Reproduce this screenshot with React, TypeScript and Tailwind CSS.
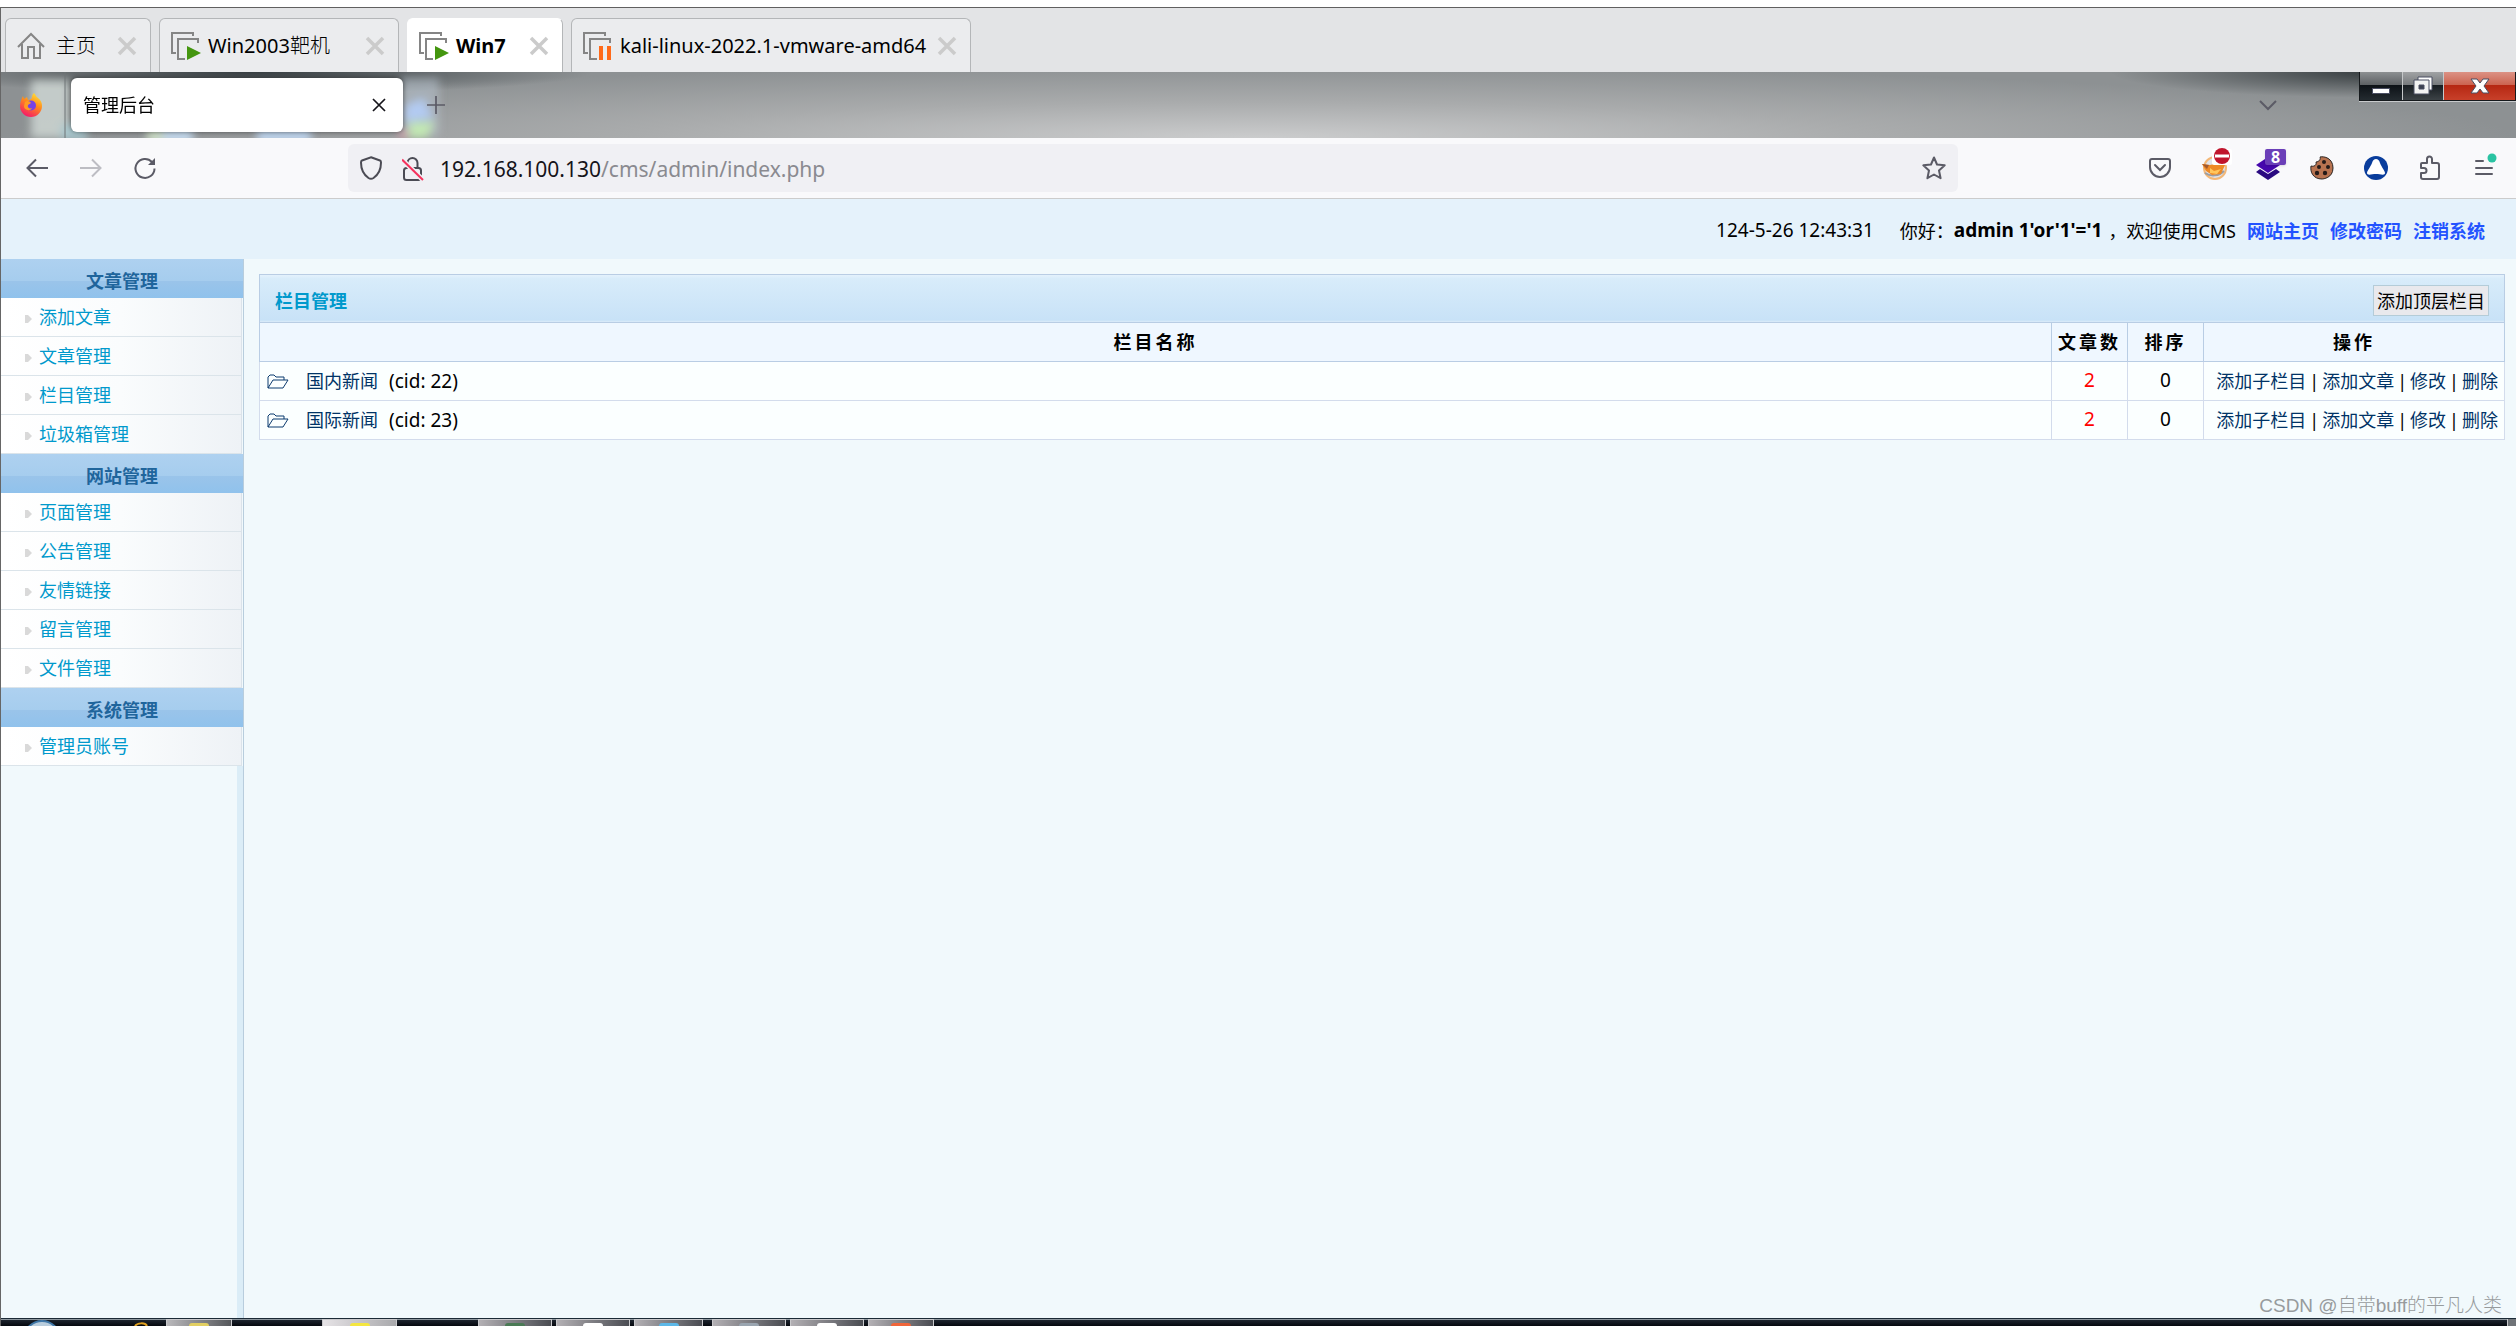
import type { ReactNode } from 'react';

const menu = [
  { title: '文章管理', items: ['添加文章', '文章管理', '栏目管理', '垃圾箱管理'] },
  { title: '网站管理', items: ['页面管理', '公告管理', '友情链接', '留言管理', '文件管理'] },
  { title: '系统管理', items: ['管理员账号'] },
];

const columns = [
  { name: '国内新闻', cid: 22, count: 2, order: 0 },
  { name: '国际新闻', cid: 23, count: 2, order: 0 },
];

const actions = ['添加子栏目', '添加文章', '修改', '删除'];

function HomeIcon() {
  return (
    <svg width="28" height="28" viewBox="0 0 28 28" fill="none" stroke="#858585" strokeWidth="2">
      <path d="M1 15 14 2l13 13M5 12v14h6V15h6v11h6V12" />
    </svg>
  );
}

function VmIcon({ paused = false }: { paused?: boolean }) {
  return (
    <svg width="30" height="30" viewBox="0 0 30 30" fill="none">
      <path d="M5 22H1V2h21v3" stroke="#858585" strokeWidth="2" />
      <path d="M14 28H7V8h20v4" stroke="#858585" strokeWidth="2" />
      {paused ? (
        <path d="M16 15h4v14h-4zM24 15h4v14h-4z" fill="#ff6a1a" />
      ) : (
        <path d="M16 15v14l14-7z" fill="#44960f" />
      )}
    </svg>
  );
}

function VmTab({
  icon,
  label,
  active = false,
  className = '',
}: {
  icon: ReactNode;
  label: ReactNode;
  active?: boolean;
  className?: string;
}) {
  return (
    <div
      className={`flex items-center h-full rounded-t-md border border-b-0 pl-[11px] pr-[13px] ${
        active ? 'bg-white border-white border-r-[#b4b6b8] font-bold' : 'bg-[#ebecee] border-[#b4b6b8]'
      } ${className}`}
    >
      {icon}
      <span className="ml-[7px] flex-1 whitespace-nowrap text-black">{label}</span>
      <button aria-label="关闭标签">
        <svg width="20" height="20" viewBox="0 0 20 20" stroke="#cbcbcb" strokeWidth="3.5">
          <path d="M2 2l16 16M18 2 2 18" />
        </svg>
      </button>
    </div>
  );
}

function VmTabs() {
  return (
    <div className="flex h-[65px] gap-2 border-t border-[#606060] bg-[#e3e4e6] pt-[10px] pl-1 text-xl">
      <VmTab className="w-[146px]" icon={<HomeIcon />} label={<span className="ml-1 font-light">主页</span>} />
      <VmTab
        className="w-60"
        icon={<VmIcon />}
        label={
          <>
            Win2003<span className="font-light">靶机</span>
          </>
        }
      />
      <VmTab className="w-[156px]" icon={<VmIcon />} label="Win7" active />
      <VmTab className="w-[400px]" icon={<VmIcon paused />} label="kali-linux-2022.1-vmware-amd64" />
    </div>
  );
}

function FirefoxLogo() {
  return (
    <svg width="24" height="24" viewBox="0 0 24 24">
      <defs>
        <linearGradient id="fox" x1="0.8" y1="0" x2="0.3" y2="1">
          <stop offset="0" stopColor="#ffe83a" />
          <stop offset="0.45" stopColor="#ff8a1c" />
          <stop offset="1" stopColor="#f5156c" />
        </linearGradient>
      </defs>
      <path d="M15 0c2 2 2 4 4 5 3 2 4 5 4 8a11 11 0 0 1-22 0C1 9 3 5 4 3l1 3 3-2 1 3c2 0 4-1 4-3s1-3 2-4z" fill="url(#fox)" />
      <circle cx="12" cy="12.500" r="5" fill="#7542e5" />
      <path d="M6 9c2-2 5-1 6 1l-3 2c-1 3 2 4 4 3-2 4-8 2-8-2z" fill="#ff9a22" />
    </svg>
  );
}

// Desktop icons showing through the glass behind the title bar
function GlassBlur() {
  return (
    <svg className="absolute inset-0 h-full w-full" aria-hidden="true">
      <defs>
        <filter id="glass" x="-50%" y="-50%" width="200%" height="200%">
          <feGaussianBlur stdDeviation="4" />
        </filter>
      </defs>
      <g filter="url(#glass)">
        <path d="M30 8h38v58H30z" fill="#d5dfdb" opacity="0.75" />
        <path d="M60 52h26v16H60z" fill="#a7c6cc" />
        <path d="M146 56h18v14h-18z" fill="#cfe0c8" />
        <path d="M162 56h30v14h-30z" fill="#c6dcf0" />
        <path d="M256 56h54v14h-54z" fill="#bfd6ef" />
        <path d="M400 6h38v58h-38z" fill="#b6c2cd" opacity="0.55" />
        <path d="M404 34l18-8 10 20-28 4z" fill="#b2cbf2" />
        <path d="M408 50h26l-8 16h-18z" fill="#c2e8b4" />
        <path d="M398 58h8v8h-8z" fill="#d79aa6" />
      </g>
      <path d="M64 0v66" stroke="#6f7476" strokeWidth="1" />
    </svg>
  );
}

function WindowControls() {
  return (
    <div className="relative flex h-[29px] self-start border border-t-0 border-[#15191c] text-white shadow-[0_1px_0_#c8cacc]">
      <button
        aria-label="最小化"
        className="flex w-[43px] items-end justify-center border-r border-[#c6c8ca] bg-[linear-gradient(#8c8f91_0%,#5e6265_45%,#0c1116_46%,#242b30_100%)] pb-1.5"
      >
        <span className="h-[6px] w-[18px] border border-[#4b4f63] bg-white" />
      </button>
      <button
        aria-label="还原"
        className="flex w-[41px] items-center justify-center border-r border-[#c6c8ca] bg-[linear-gradient(#a0a2a4_0%,#787b7e_45%,#171c21_46%,#3c4246_100%)]"
      >
        <svg width="20" height="20" viewBox="0 0 20 20" stroke="#4b4f63">
          <path d="M5 1h14v13H5z" fill="#fff" />
          <path d="M1 4h15v14H1z" fill="#f2f2f2" />
          <path d="M6 9h5v4H6z" fill="#3c4150" />
        </svg>
      </button>
      <button
        aria-label="关闭"
        className="flex w-[71px] items-center justify-center bg-[linear-gradient(#dc9184_0%,#cc6552_45%,#b52712_46%,#c8402a_100%)]"
      >
        <svg width="20" height="18" viewBox="0 0 20 18">
          <path d="M1 2h6l3 4 3-4h6l-5 7 5 7h-6l-3-4-3 4H1l5-7z" fill="#fff" stroke="#4b4f63" />
        </svg>
      </button>
    </div>
  );
}

function TitleBar() {
  return (
    <div className="relative flex h-[66px] items-center overflow-hidden bg-[radial-gradient(ellipse_340px_22px_at_10%_0%,rgba(40,48,52,0.85),transparent),radial-gradient(ellipse_280px_26px_at_95%_0%,rgba(35,42,45,0.85),transparent),radial-gradient(ellipse_50%_110%_at_50%_100%,#cbcccd_0%,#a9abac_50%,#8d9193_100%)]">
      <GlassBlur />
      <div className="relative flex w-[70px] items-center pl-[18px]">
        <FirefoxLogo />
      </div>
      <div className="relative flex h-[54px] w-[332px] items-center justify-between rounded-md bg-white pl-3 pr-4 text-lg text-black shadow-[0_0_5px_rgba(0,0,0,0.5)]">
        <span>管理后台</span>
        <button aria-label="关闭标签页">
          <svg width="16" height="16" viewBox="0 0 16 16" stroke="#15141a" strokeWidth="1.700">
            <path d="M2 2l12 12M14 2 2 14" />
          </svg>
        </button>
      </div>
      <button aria-label="新标签页" className="relative ml-6">
        <svg width="18" height="18" viewBox="0 0 18 18" stroke="#5b5b66" strokeWidth="1.700">
          <path d="M9 0v18M0 9h18" />
        </svg>
      </button>
      <div className="flex-1" />
      <button aria-label="列出所有标签页" className="relative mr-[81px]">
        <svg width="20" height="12" viewBox="0 0 20 12" fill="none" stroke="#5b5b66" strokeWidth="2">
          <path d="M2 2l8 8 8-8" />
        </svg>
      </button>
      <WindowControls />
    </div>
  );
}

function ToolButton({ label, children }: { label: string; children: ReactNode }) {
  return (
    <button aria-label={label} className="relative flex h-12 w-[54px] items-center justify-center">
      {children}
    </button>
  );
}

function Toolbar() {
  return (
    <div className="flex h-[61px] items-center border-b border-[#cccccc] bg-[#f9f9fb] pl-[9px] pr-[5px]">
      <ToolButton label="后退">
        <svg width="22" height="20" viewBox="0 0 22 20" fill="none" stroke="#5b5b66" strokeWidth="2">
          <path d="M22 10H2M10 1.500 1.500 10l8.500 8.500" />
        </svg>
      </ToolButton>
      <ToolButton label="前进">
        <svg width="22" height="20" viewBox="0 0 22 20" fill="none" stroke="#bdbdc3" strokeWidth="2">
          <path d="M0 10h20M12 1.500l8.500 8.500-8.500 8.500" />
        </svg>
      </ToolButton>
      <ToolButton label="刷新">
        <svg width="24" height="24" viewBox="0 0 24 24" fill="none" stroke="#5b5b66" strokeWidth="2">
          <path d="M19 6a9.500 9.500 0 1 0 2.500 6.500" />
          <path d="M22 2v7h-7z" fill="#5b5b66" stroke="none" />
        </svg>
      </ToolButton>
      <div className="ml-44 flex h-12 flex-1 items-center rounded-md bg-[#f0f0f4] pl-3">
        <svg width="22" height="24" viewBox="0 0 22 24" fill="none" stroke="#4b4b54" strokeWidth="2">
          <path d="M11 1.200 20 4.500c1 .4 1 1 1 2 0 7-2.500 12-7.500 15.500-1.800 1.200-3.200 1.200-5 0C3.500 18.500 1 13.500 1 6.500c0-1 0-1.600 1-2z" />
        </svg>
        <svg className="ml-5" width="22" height="25" viewBox="0 0 22 25" fill="none" stroke="#4b4b54" strokeWidth="2">
          <rect x="2" y="12" width="17" height="12" rx="2.500" />
          <path d="M5.500 12V7a5 5 0 0 1 10 0v5" />
          <path d="M0 3.500 21 24" stroke="#f0f0f4" strokeWidth="5" />
          <path d="M0 3.500 21 24" stroke="#f5325c" />
        </svg>
        <div className="ml-4 flex-1 pt-1 text-[21px] text-[#8a8a90]">
          <span className="text-[#15141a]">192.168.100.130</span>/cms/admin/index.php
        </div>
        <button aria-label="收藏" className="mr-3">
          <svg width="24" height="24" viewBox="0 0 24 24" fill="none" stroke="#5b5b66" strokeWidth="2" strokeLinejoin="round">
            <path d="M12 1.500 15 8.500l7.700.8-5.700 5.200 1.600 7.700-6.600-3.700-6.600 3.700L7 14.500 1.300 9.300 9 8.500z" />
          </svg>
        </button>
      </div>
      <div className="ml-[175px] flex">
        <ToolButton label="Pocket">
          <svg width="22" height="20" viewBox="0 0 22 20" fill="none" stroke="#5b5b66" strokeWidth="2">
            <path d="M3 1h16a2 2 0 0 1 2 2v6a10 10 0 0 1-20 0V3a2 2 0 0 1 2-2z" />
            <path d="M6 7l5 5 5-5" strokeLinecap="round" />
          </svg>
        </ToolButton>
        <ToolButton label="FoxyProxy">
          <svg width="36" height="36" viewBox="-5 1 36 36" overflow="visible">
            <circle cx="14" cy="19" r="11" fill="#dfe3ea" stroke="#f3b878" strokeWidth="2" />
            <path d="M4 24c6 4 14 3 19-2" fill="none" stroke="#9b9da2" strokeWidth="2" />
            <path d="M1 15l8 1 9-2 6 2-4 9-9 1-6-4z" fill="#ee8a26" />
            <path d="M1 15l7 1-2 4z" fill="#a4592c" />
            <path d="M9 19l4 3 7-2-4 5-7-1z" fill="#ffc65c" />
            <rect x="11" y="0" width="20" height="16" rx="2" fill="#fff" />
            <circle cx="21" cy="7" r="8" fill="#c0142c" />
            <path d="M14 5.500h14v3H14z" fill="#fff" />
          </svg>
        </ToolButton>
        <ToolButton label="Wappalyzer">
          <svg width="24" height="24" viewBox="0 0 24 24">
            <path d="M0 16l4-3 8 5 8-5 4 3-12 8z" fill="#2a0a80" />
            <path d="M0 9 12 1l12 8-12 8z" fill="#4608ad" />
          </svg>
          <span className="absolute top-[5px] left-[24px] h-4 w-[21px] rounded-xs bg-[#6b3fb8] text-center font-bold leading-4 text-white shadow-sm">
            8
          </span>
        </ToolButton>
        <ToolButton label="Cookie">
          <svg width="24" height="24" viewBox="0 0 24 24">
            <path
              d="M10 1c4-1 13 1 13 11s-10 11-11 11C3 23 0 16 1 10c3 1 6-1 5-4 3 0 5-3 4-5z"
              fill="#b87350"
              stroke="#2b2523"
              strokeWidth="1"
            />
            <g fill="#241a18">
              <circle cx="14" cy="6" r="2" />
              <circle cx="9" cy="11" r="2" />
              <circle cx="18" cy="11" r="2" />
              <circle cx="7" cy="17" r="2.200" />
              <circle cx="15" cy="17" r="2.200" />
            </g>
          </svg>
        </ToolButton>
        <ToolButton label="扩展">
          <svg width="24" height="24" viewBox="0 0 24 24">
            <circle cx="12" cy="12" r="12" fill="#0a3d9c" />
            <path d="M12 3c2 0 3 1 4 4s5 8 5 10c0 3-5 1-9 1s-9 2-9-1c0-2 4-7 5-10s2-4 4-4z" fill="#fff" />
          </svg>
        </ToolButton>
        <ToolButton label="扩展程序">
          <svg width="22" height="26" viewBox="0 0 22 26" fill="none" stroke="#5b5b66" strokeWidth="2" strokeLinejoin="round">
            <path d="M3 8h5V4a2.500 2.500 0 0 1 5 0v4h5a2 2 0 0 1 2 2v12a2 2 0 0 1-2 2H4a2 2 0 0 1-2-2v-4h3a2.500 2.500 0 0 0 0-5H2V9a1 1 0 0 1 1-1z" />
          </svg>
        </ToolButton>
        <ToolButton label="菜单">
          <svg width="24" height="26" viewBox="0 0 24 26" stroke="#5b5b66" strokeWidth="2" strokeLinecap="round" overflow="visible">
            <path d="M4 6h7M4 13h16M4 19h16" />
            <circle cx="20" cy="3" r="4.500" fill="#2ac3a2" stroke="none" />
          </svg>
        </ToolButton>
      </div>
    </div>
  );
}

function Header() {
  return (
    <header className="flex h-[60px] items-center justify-end bg-[#e5f2fb] pt-1 pr-[31px] text-lg text-black">
      <span className="mr-[26px] text-[19px]">124-5-26 12:43:31</span>
      <span>你好：</span>
      <b className="text-[19px]">admin 1'or'1'='1</b>
      <span className="ml-1.5">，欢迎使用CMS</span>
      <nav className="ml-[11px] flex gap-[11px] font-bold text-[#2353ff]">
        <a href="#home">网站主页</a>
        <a href="#password">修改密码</a>
        <a href="#logout">注销系统</a>
      </nav>
    </header>
  );
}

function Sidebar() {
  return (
    <aside className="flex w-[243px] flex-col border-r border-[#b8cddd] text-lg">
      {menu.map((group) => (
        <div key={group.title}>
          <h2 className="flex h-[39px] items-center justify-center bg-[linear-gradient(#aed1f0_0%,#a6cdee_56%,#9ac4ea_57%,#90c2ec_100%)] pt-1 font-bold text-[#1f659c]">
            {group.title}
          </h2>
          <ul className="mr-px border-r border-[#dbe3ea]">
            {group.items.map((item) => (
              <li
                key={item}
                className="flex h-[39px] items-center border-b border-[#dbe4ea] bg-[linear-gradient(to_right,#ffffff,#fafcfd_50%,#eef2f6)] pl-6"
              >
                <svg width="8" height="8" viewBox="0 0 8 8" className="mt-1">
                  <path d="M0 0h3l4 4-4 4H0z" fill="#d9d9d9" />
                </svg>
                <a href="#menu" className="ml-[6px] text-[#0099cc]">
                  {item}
                </a>
              </li>
            ))}
          </ul>
        </div>
      ))}
      <div className="flex-1 border-r-[6px] border-[#dbedf7]" />
    </aside>
  );
}

function FolderIcon() {
  return (
    <svg width="22" height="15" viewBox="0 0 22 15" fill="none" stroke="#0b3a6e" strokeWidth="1">
      <path d="M1 14V3l2-2h4l2 2h8v3M1 14 6 6h15l-5 8z" />
    </svg>
  );
}

function CategoryPanel() {
  return (
    <main className="flex-1 pt-[15px] pr-[11px] pl-[15px] text-lg text-black">
      <div className="flex h-[48px] items-center justify-between border border-b-0 border-[#b9cde4] bg-[linear-gradient(#e4f2fc_0%,#d8ecfa_8%,#c8e2f7_96%,#dcecf9_100%)] pt-1 pr-[15px] pl-[15px]">
        <h1 className="font-bold text-[#0099cc]">栏目管理</h1>
        <button className="flex h-[31px] items-center border border-[#b4ccd8] bg-[#e9e9ed] px-[3px]">
          添加顶层栏目
        </button>
      </div>
      <table className="w-full table-fixed border-collapse">
        <thead>
          <tr className="h-[39px] bg-[#eff7ff] tracking-[3px]">
            <th className="border border-[#b9cde4] p-0">栏目名称</th>
            <th className="w-[76px] border border-[#b9cde4] p-0">文章数</th>
            <th className="w-[76px] border border-[#b9cde4] p-0">排序</th>
            <th className="w-[301px] border border-[#b9cde4] p-0">操作</th>
          </tr>
        </thead>
        <tbody>
          {columns.map((c) => (
            <tr key={c.cid} className="h-[39px] bg-[#fbffff]">
              <td className="border border-[#d3dcec] p-0">
                <div className="flex items-center pl-[7px]">
                  <FolderIcon />
                  <a href="#column" className="ml-[17px] text-[#003366]">
                    {c.name}
                  </a>
                  <span className="ml-[11px] text-[19px] leading-7">(cid: {c.cid})</span>
                </div>
              </td>
              <td className="border border-[#d3dcec] p-0 text-center text-[19px] text-[#ff0000]">{c.count}</td>
              <td className="border border-[#d3dcec] p-0 text-center text-[19px]">{c.order}</td>
              <td className="border border-[#d3dcec] p-0">
                <div className="flex items-center justify-end gap-[3px] pr-[6px] whitespace-nowrap">
                  {actions.map((a, i) => (
                    <span key={a} className="flex items-center gap-[3px]">
                      {i > 0 && <span>|</span>}
                      <a href="#action" className="text-[#003366]">
                        {a}
                      </a>
                    </span>
                  ))}
                </div>
              </td>
            </tr>
          ))}
        </tbody>
      </table>
    </main>
  );
}

const tasks = [
  { width: 'ml-[165px] w-[66px]', tone: 'bg-[linear-gradient(to_right,#b9b8bb,#55575b)]', icon: '#e2cf62' },
  { width: 'ml-[90px] w-[75px]', tone: 'bg-[linear-gradient(to_right,#e6e3e6,#a9a9ac)]', icon: '#f4e640' },
  { width: 'ml-[81px] w-[74px]', tone: 'bg-[linear-gradient(to_right,#b3b0b4,#4a4c52)]', icon: '#4a7a55' },
  { width: 'ml-1 w-[74px]', tone: 'bg-[linear-gradient(to_right,#b3b0b4,#4a4c52)]', icon: '#ffffff' },
  { width: 'ml-1 w-[69px]', tone: 'bg-[linear-gradient(to_right,#b3b0b4,#4a4c52)]', icon: '#5cb8e8' },
  { width: 'ml-[9px] w-[74px]', tone: 'bg-[linear-gradient(to_right,#b3b0b4,#4a4c52)]', icon: '#9aa5b0' },
  { width: 'ml-1 w-[74px]', tone: 'bg-[linear-gradient(to_right,#b3b0b4,#4a4c52)]', icon: '#ffffff' },
  { width: 'ml-1 w-[66px]', tone: 'bg-[linear-gradient(to_right,#b3b0b4,#4a4c52)]', icon: '#f0653a' },
];

function Taskbar() {
  return (
    <footer className="relative flex h-2 overflow-hidden border-t border-[#1b2a36] bg-[linear-gradient(#8d979e_0%,#8d979e_14%,#1c232d_15%,#05080e_100%)]">
      <svg className="absolute top-0 left-6 h-full w-[140px]" viewBox="0 0 140 7" aria-hidden="true">
        <circle cx="17" cy="20" r="18" fill="#b9cddd" stroke="#3f77a8" strokeWidth="2" />
        <path d="M110 7c2-3 10-4 12 0" fill="none" stroke="#e0a020" strokeWidth="2" />
      </svg>
      {tasks.map((t, i) => (
        <div key={i} className={`flex h-full items-end justify-center border-t border-x border-[#c9c9cc] ${t.width} ${t.tone}`}>
          <span className="h-[3px] w-5 rounded-t-sm" style={{ backgroundColor: t.icon }} />
        </div>
      ))}
      <div className="flex-1" />
      <div className="h-full w-[9px] border-l border-[#c9c9cc] bg-[#6f7377]" />
    </footer>
  );
}

export default function App() {
  return (
    <div className="relative flex min-h-screen flex-col bg-white pt-[7px] font-['Noto_Sans','Noto_Sans_CJK_SC',sans-serif]">
      <div className="flex flex-1 flex-col border-l border-[#666666]">
        <VmTabs />
        <div className="flex flex-1 flex-col">
          <TitleBar />
          <Toolbar />
          <Header />
          <div className="flex flex-1 bg-[#f1f9fc]">
            <Sidebar />
            <CategoryPanel />
          </div>
          <Taskbar />
        </div>
      </div>
      <div className="absolute right-3.5 bottom-1.5 font-['Liberation_Sans','Noto_Sans_CJK_SC',sans-serif] text-[19px] font-light text-[#979b9d]">
        CSDN @自带buff的平凡人类
      </div>
    </div>
  );
}
